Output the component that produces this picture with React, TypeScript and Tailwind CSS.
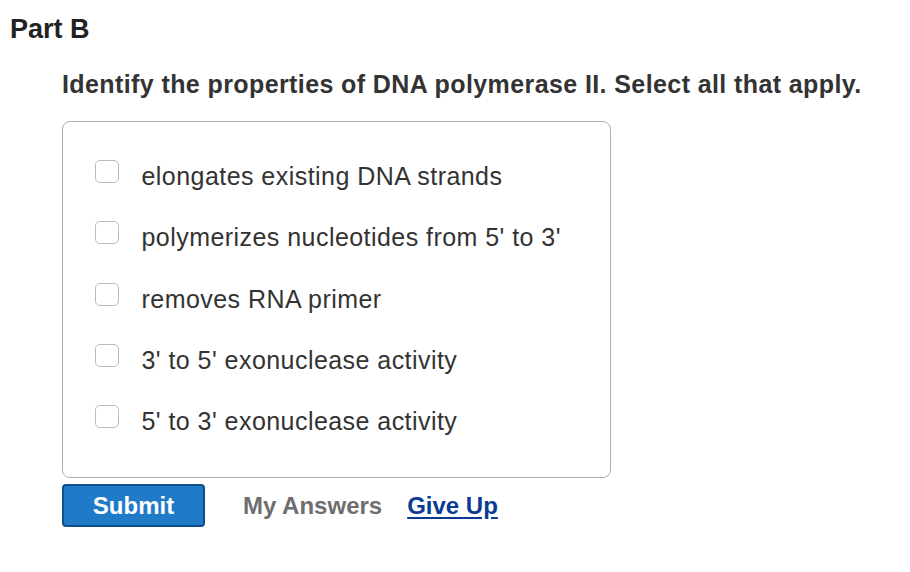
const options = [
  "elongates existing DNA strands",
  "polymerizes nucleotides from 5' to 3'",
  "removes RNA primer",
  "3' to 5' exonuclease activity",
  "5' to 3' exonuclease activity",
]

const App = () => {
  return (
    <div className="h-[572px] w-full bg-white font-['Liberation_Sans',Arial,sans-serif] text-[#333333]">
      <div className="pl-[10px] pt-[13px]">
        <h2 className="text-[27px] font-bold leading-[32px] text-[#222222]">
          Part B
        </h2>
        <div className="ml-[52px]">
          <p className="mt-[25px] text-[25px] font-bold leading-[28px] tracking-[0.4px] text-[#333333]">
            Identify the properties of DNA polymerase II. Select all that apply.
          </p>

          <div className="mt-[23px] w-[549px] rounded-[8px] border-[1.5px] border-[#adadad] pb-[42px] pl-[31.5px] pt-[40px]">
            <div className="flex flex-col gap-[33.3px]">
              {options.map((opt) => (
                <label key={opt} className="flex items-start">
                  <span className="-mt-[2px] h-[23px] w-[24px] shrink-0 rounded-[5px] border-[1.5px] border-[#bbbbbb] bg-white" />
                  <span className="ml-[23px] text-[25px] leading-[28px] tracking-[0.45px] text-[#333333]">
                    {opt}
                  </span>
                </label>
              ))}
            </div>
          </div>

          <div className="mt-[6px] flex items-center">
            <button className="h-[43px] w-[143px] rounded-[4px] border-2 border-[#0f4f86] bg-[#1f7bc8] text-[24px] font-bold leading-none text-white">
              Submit
            </button>
            <span className="ml-[38px] text-[24px] font-bold text-[#6e6e6e]">
              My Answers
            </span>
            <a className="ml-[25px] text-[24px] font-bold text-[#0b3a94] underline underline-offset-[3px]">
              Give Up
            </a>
          </div>
        </div>
      </div>
    </div>
  )
}

export default App
